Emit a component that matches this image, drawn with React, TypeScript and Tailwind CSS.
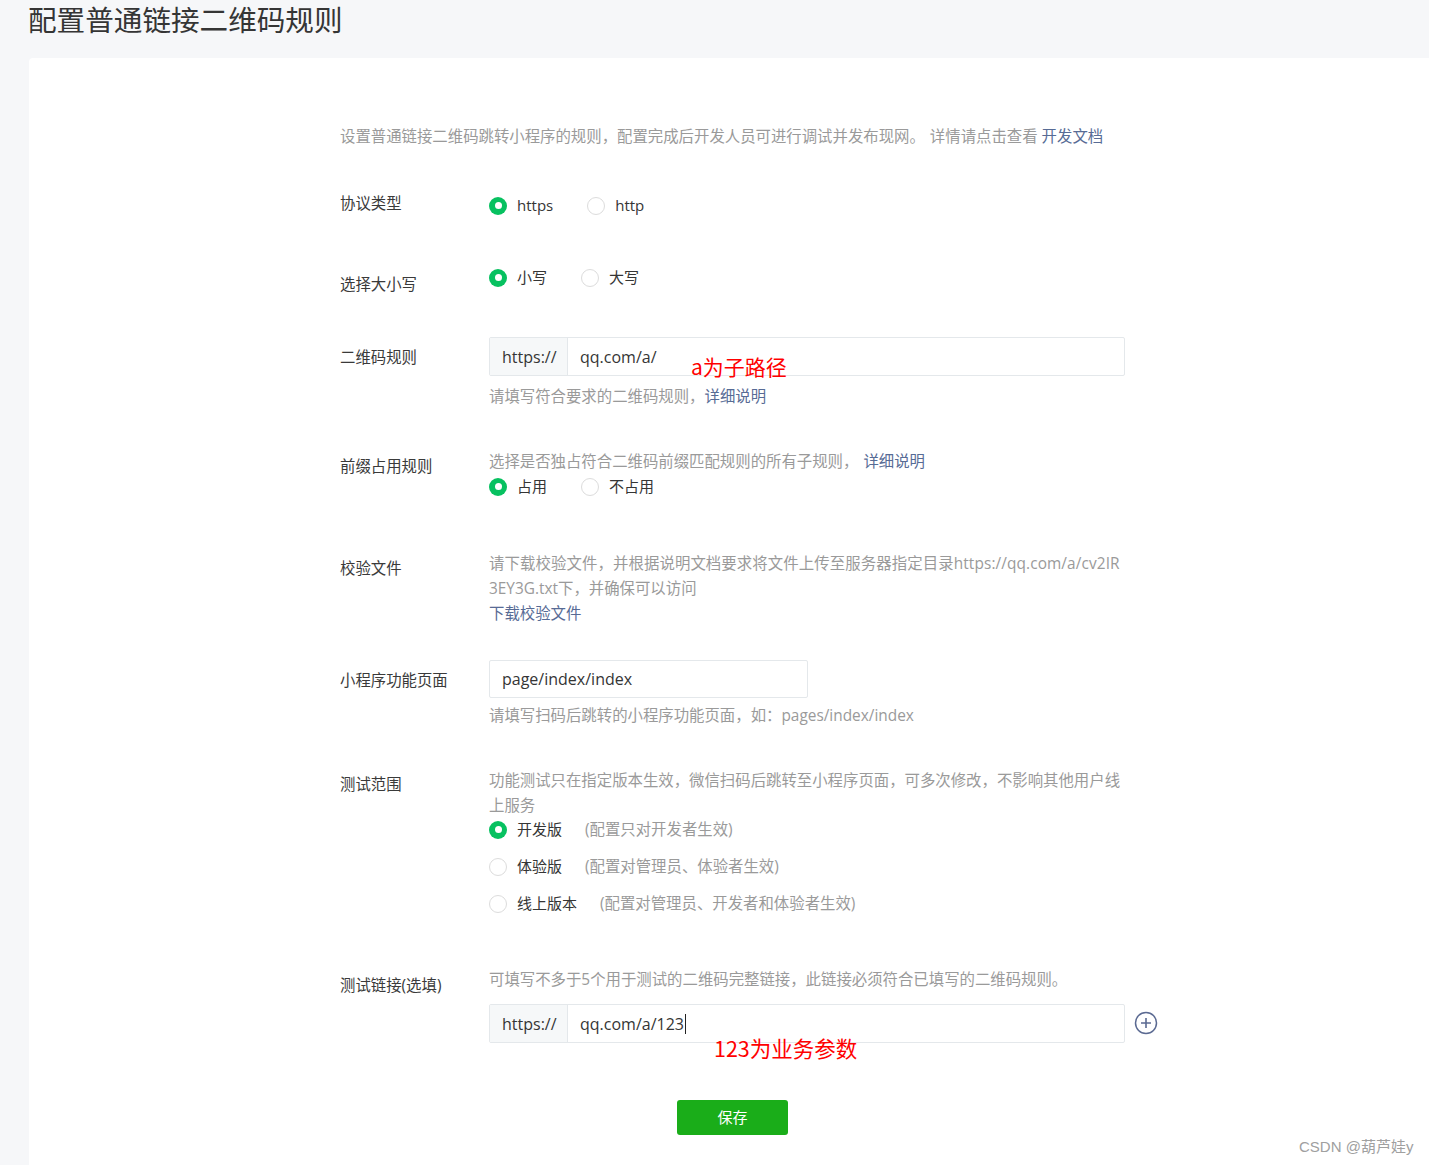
import React from "react";

function Radio({ checked, label }: { checked?: boolean; label: string }) {
  return (
    <div className="flex items-center h-[25px]">
      {checked ? (
        <span className="w-[18px] h-[18px] rounded-full bg-[#07c160] flex items-center justify-center shrink-0">
          <span className="w-[7px] h-[7px] rounded-full bg-white" />
        </span>
      ) : (
        <span className="w-[18px] h-[18px] rounded-full border border-[#dcdcdc] bg-white shrink-0" />
      )}
      <span className="ml-[10px] text-[15px] text-[#353535] whitespace-nowrap">{label}</span>
    </div>
  );
}

function Label({ text, offset }: { text: string; offset: string }) {
  return (
    <div className={`relative w-[149px] shrink-0 text-[15.4px] leading-[25px] text-[#3a3a3a] whitespace-nowrap ${offset}`}>
      {text}
    </div>
  );
}

export default function App() {
  return (
    <div className="min-h-[1165px] bg-[#f6f7f9] font-['Open_Sans','Noto_Sans_CJK_SC',sans-serif] relative overflow-hidden">
      <div className="h-[58px] pl-[28px] pt-[1px]">
        <h1 className="text-[28.6px] leading-[36px] text-[#353535] font-['Noto_Sans_CJK_SC',sans-serif]">
          配置普通链接二维码规则
        </h1>
      </div>
      <div className="ml-[29px] bg-white rounded-tl-[4px] min-h-[1106px] pt-[66px] pl-[311px] pb-[40px]">
        <div className="w-[785px]">
          <div className="text-[15.4px] leading-[25px] text-[#9a9a9a] whitespace-nowrap">
            设置普通链接二维码跳转小程序的规则，配置完成后开发人员可进行调试并发布现网。
            <span className="ml-[5px]">详情请点击查看</span>
            <span className="ml-[4px] text-[#576b95]">开发文档</span>
          </div>

          {/* 协议类型 */}
          <div className="flex items-start mt-[44px]">
            <Label text="协议类型" offset="-top-[2px]" />
            <div className="flex gap-[34px]">
              <Radio checked label="https" />
              <Radio label="http" />
            </div>
          </div>

          {/* 选择大小写 */}
          <div className="flex items-start mt-[47px]">
            <Label text="选择大小写" offset="top-[7px]" />
            <div className="flex gap-[34px]">
              <Radio checked label="小写" />
              <Radio label="大写" />
            </div>
          </div>

          {/* 二维码规则 */}
          <div className="flex items-start mt-[47px]">
            <Label text="二维码规则" offset="top-[8px]" />
            <div className="w-[636px]">
              <div className="relative flex h-[39px] border border-[#e4e8eb] rounded-[2px] text-[16px] text-[#353535]">
                <div className="w-[78px] shrink-0 bg-[#f6f8f9] border-r border-[#e4e8eb] pl-[12px] flex items-center">
                  https://
                </div>
                <div className="pl-[12px] flex items-center">qq.com/a/</div>
                <div className="absolute left-[201px] top-[14px] text-[21px] leading-[28px] text-[#ff0000] font-['Noto_Sans_CJK_SC',sans-serif] whitespace-nowrap">
                  a为子路径
                </div>
              </div>
              <div className="mt-[8px] text-[15.4px] leading-[25px] text-[#9a9a9a]">
                请填写符合要求的二维码规则，<span className="text-[#576b95]">详细说明</span>
              </div>
            </div>
          </div>

          {/* 前缀占用规则 */}
          <div className="flex items-start mt-[40px]">
            <Label text="前缀占用规则" offset="top-[5px]" />
            <div>
              <div className="text-[15.4px] leading-[25px] text-[#9a9a9a] whitespace-nowrap">
                选择是否独占符合二维码前缀匹配规则的所有子规则，
                <span className="ml-[5px] text-[#576b95]">详细说明</span>
              </div>
              <div className="flex gap-[34px]">
                <Radio checked label="占用" />
                <Radio label="不占用" />
              </div>
            </div>
          </div>

          {/* 校验文件 */}
          <div className="flex items-start mt-[52px]">
            <Label text="校验文件" offset="top-[5px]" />
            <div className="w-[636px] text-[15.4px] leading-[25px] text-[#9a9a9a]">
              <div className="whitespace-nowrap tracking-[0.1px]">
                请下载校验文件，并根据说明文档要求将文件上传至服务器指定目录https://qq.com/a/cv2IR
              </div>
              <div className="whitespace-nowrap">3EY3G.txt下，并确保可以访问</div>
              <div className="text-[#576b95]">下载校验文件</div>
            </div>
          </div>

          {/* 小程序功能页面 */}
          <div className="flex items-start mt-[34px]">
            <Label text="小程序功能页面" offset="top-[8px]" />
            <div>
              <div className="w-[319px] h-[38px] border border-[#e4e8eb] rounded-[2px] pl-[12px] flex items-center text-[16px] text-[#353535]">
                page/index/index
              </div>
              <div className="mt-[5px] text-[15.4px] leading-[25px] text-[#9a9a9a] whitespace-nowrap">
                请填写扫码后跳转的小程序功能页面，如：pages/index/index
              </div>
            </div>
          </div>

          {/* 测试范围 */}
          <div className="flex items-start mt-[40px]">
            <Label text="测试范围" offset="top-[4px]" />
            <div className="w-[636px]">
              <div className="text-[15.4px] leading-[25px] text-[#9a9a9a]">
                <div className="whitespace-nowrap">
                  功能测试只在指定版本生效，微信扫码后跳转至小程序页面，可多次修改，不影响其他用户线
                </div>
                <div>上服务</div>
              </div>
              <div className="-mt-[1px] flex flex-col gap-[12px]">
                <div className="flex items-center">
                  <Radio checked label="开发版" />
                  <span className="ml-[23px] text-[15.4px] text-[#9a9a9a]">(配置只对开发者生效)</span>
                </div>
                <div className="flex items-center">
                  <Radio label="体验版" />
                  <span className="ml-[23px] text-[15.4px] text-[#9a9a9a]">(配置对管理员、体验者生效)</span>
                </div>
                <div className="flex items-center">
                  <Radio label="线上版本" />
                  <span className="ml-[23px] text-[15.4px] text-[#9a9a9a]">(配置对管理员、开发者和体验者生效)</span>
                </div>
              </div>
            </div>
          </div>

          {/* 测试链接 */}
          <div className="flex items-start mt-[51px]">
            <Label text="测试链接(选填)" offset="top-[6px]" />
            <div>
              <div className="text-[15.4px] leading-[25px] text-[#9a9a9a] whitespace-nowrap">
                可填写不多于5个用于测试的二维码完整链接，此链接必须符合已填写的二维码规则。
              </div>
              <div className="mt-[12px] flex items-center">
                <div className="relative w-[636px] flex h-[39px] border border-[#e4e8eb] rounded-[2px] text-[16px] text-[#353535]">
                  <div className="w-[78px] shrink-0 bg-[#f6f8f9] border-r border-[#e4e8eb] pl-[12px] flex items-center">
                    https://
                  </div>
                  <div className="pl-[12px] flex items-center">
                    qq.com/a/123
                    <span className="inline-block w-[1px] h-[20px] bg-[#222] ml-[1px]" />
                  </div>
                  <div className="absolute left-[224px] top-[29px] text-[21.5px] leading-[28px] text-[#ff0000] font-['Noto_Sans_CJK_SC',sans-serif] whitespace-nowrap">
                    123为业务参数
                  </div>
                </div>
                <svg className="ml-[9px] -mt-[2px]" width="24" height="24" viewBox="0 0 24 24" fill="none">
                  <circle cx="12" cy="12" r="10.5" stroke="#5b6a92" strokeWidth="1.5" />
                  <path d="M12 7v10M7 12h10" stroke="#5b6a92" strokeWidth="1.6" />
                </svg>
              </div>
            </div>
          </div>

          {/* 保存 */}
          <div className="mt-[57px] flex justify-center">
            <button className="w-[111px] h-[35px] bg-[#1aad19] rounded-[3px] text-white text-[15px] font-['Noto_Sans_CJK_SC',sans-serif]">
              保存
            </button>
          </div>
        </div>
      </div>
      <div className="absolute left-[1299px] top-[1137px] text-[15px] leading-[20px] text-[#a0a0a0] font-['Liberation_Sans','Noto_Sans_CJK_SC',sans-serif] whitespace-nowrap">
        CSDN @葫芦娃y
      </div>
    </div>
  );
}
